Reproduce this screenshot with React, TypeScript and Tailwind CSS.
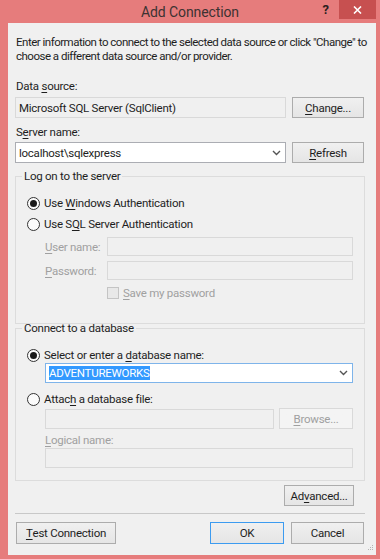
import React from "react";

const font = { fontFamily: 'Roboto, "Noto Sans", sans-serif' };

// mnemonic letter, underlined like a Win32 access key
function K({ c }: { c: string }) {
  return <span className="underline underline-offset-[2px] decoration-1">{c}</span>;
}

function Btn({
  children,
  className = "",
  primary,
  disabled,
}: {
  children: React.ReactNode;
  className?: string;
  primary?: boolean;
  disabled?: boolean;
}) {
  return (
    <div
      className={[
        "flex items-center justify-center border bg-gradient-to-b from-[#f0f0f0] to-[#e5e5e5]",
        primary ? "border-[#3c9bf0]" : disabled ? "border-[#d9d9d9]" : "border-[#acacac]",
        disabled ? "text-[#a0a0a0] from-[#f4f4f4] to-[#f4f4f4]" : "text-[#1e1e1e]",
        className,
      ].join(" ")}
    >
      {children}
    </div>
  );
}

function Chevron() {
  return (
    <svg width="9" height="6" viewBox="0 0 9 6" className="shrink-0">
      <path d="M1 1 L4.5 4.5 L8 1" fill="none" stroke="#555" strokeWidth="1.4" />
    </svg>
  );
}

function Radio({ checked }: { checked?: boolean }) {
  return (
    <span className="flex h-[13px] w-[13px] shrink-0 items-center justify-center rounded-full border border-[#333] bg-[#fbfbfb]">
      {checked && <span className="h-[7px] w-[7px] rounded-full bg-[#1a1a1a]" />}
    </span>
  );
}

export default function App() {
  return (
    <div
      className="flex h-[559px] w-[380px] flex-col overflow-hidden bg-[#e67c7c] text-[11.5px] leading-[14px] tracking-[-0.25px] text-[#1e1e1e]"
      style={font}
    >
      {/* title bar */}
      <div className="flex h-[23px] shrink-0 items-start">
        <div className="w-[68px]" />
        <div className="flex-1 pt-[3px] text-center text-[14px] leading-[18px] tracking-[-0.1px] text-[#3d3232]">
          Add Connection
        </div>
        <div className="flex w-[68px] items-start">
          <span className="w-[27px] pt-[2px] text-center text-[13px] font-bold leading-[16px] text-[#2a2020]">
            ?
          </span>
          <div className="flex h-[19px] w-[37px] items-center justify-center bg-[#c75050]">
            <svg width="9" height="8" viewBox="0 0 9 8">
              <path d="M1 0.5 L8 7.5 M8 0.5 L1 7.5" stroke="#fff" strokeWidth="1.6" />
            </svg>
          </div>
          <div className="w-[4px]" />
        </div>
      </div>

      {/* client area */}
      <div className="relative ml-[8px] mr-[4px] mb-[4px] flex flex-1 flex-col bg-[#f0f0f0] pl-[7px]">
        <p className="mt-[12px] pl-[1px] whitespace-nowrap tracking-[-0.5px]">
          Enter information to connect to the selected data source or click "Change" to
          <br />
          choose a different data source and/or provider.
        </p>

        <div className="mt-[16px] pl-[1px]">
          Data <K c="s" />ource:
        </div>
        <div className="mt-[4px] flex">
          <div className="flex h-[21px] w-[271px] items-center border border-[#d9d9d9] bg-[#f0f0f0] pl-[3px]">
            Microsoft SQL Server (SqlClient)
          </div>
          <Btn className="ml-[6px] h-[21px] w-[72px]">
            <K c="C" />
            hange...
          </Btn>
        </div>

        <div className="mt-[7px] pl-[1px]">
          S<K c="e" />rver name:
        </div>
        <div className="mt-[3px] flex">
          <div className="flex h-[21px] w-[271px] items-center border border-[#abadb3] bg-white pl-[3px] pr-[4px]">
            <span className="flex-1">localhost\sqlexpress</span>
            <Chevron />
          </div>
          <Btn className="ml-[6px] h-[21px] w-[72px]">
            <K c="R" />
            efresh
          </Btn>
        </div>

        {/* log on group */}
        <fieldset className="mt-[6px] w-[350px] border border-[#dcdcdc] pb-[23px]">
          <legend className="ml-[6px] px-[2px]">Log on to the server</legend>
          <div className="mt-[13px] ml-[11px] flex items-center gap-[4px]">
            <Radio checked />
            <span>
              Use <K c="W" />indows Authentication
            </span>
          </div>
          <div className="mt-[7px] ml-[11px] flex items-center gap-[4px]">
            <Radio />
            <span>
              Use S<K c="Q" />L Server Authentication
            </span>
          </div>
          <div className="mt-[6px] flex items-center text-[#a0a0a0]">
            <span className="w-[91px] shrink-0 whitespace-nowrap pl-[29px]">
              <K c="U" />
              ser name:
            </span>
            <div className="h-[19px] w-[246px] border border-[#d9d9d9] bg-[#f0f0f0]" />
          </div>
          <div className="mt-[5px] flex items-center text-[#a0a0a0]">
            <span className="w-[91px] shrink-0 whitespace-nowrap pl-[29px]">
              <K c="P" />
              assword:
            </span>
            <div className="h-[19px] w-[246px] border border-[#d9d9d9] bg-[#f0f0f0]" />
          </div>
          <div className="mt-[6px] ml-[91px] flex items-center gap-[4px] text-[#a0a0a0]">
            <span className="h-[12px] w-[12px] border border-[#c4c4c4] bg-[#e8e8e8]" />
            <span>
              <K c="S" />
              ave my password
            </span>
          </div>
        </fieldset>

        {/* database group */}
        <fieldset className="mt-[-3px] w-[350px] border border-[#dcdcdc] pb-[12px]">
          <legend className="ml-[6px] px-[2px]">Connect to a database</legend>
          <div className="mt-[13px] ml-[11px] flex items-center gap-[4px]">
            <Radio checked />
            <span>
              Select or enter a <K c="d" />atabase name:
            </span>
          </div>
          <div className="mt-[1px] ml-[29px] flex h-[20px] w-[308px] items-center border border-[#7eb4ea] bg-white pl-[3px] pr-[4px]">
            <span className="flex-1">
              <span className="bg-[#3399ff] text-white">ADVENTUREWORKS</span>
            </span>
            <Chevron />
          </div>
          <div className="mt-[9px] ml-[11px] flex items-center gap-[4px]">
            <Radio />
            <span>
              Attac<K c="h" /> a database file:
            </span>
          </div>
          <div className="mt-[2px] ml-[29px] flex items-center">
            <div className="h-[20px] w-[229px] border border-[#d9d9d9] bg-[#f0f0f0]" />
            <Btn disabled className="ml-[5px] h-[21px] w-[74px]">
              <K c="B" />
              rowse...
            </Btn>
          </div>
          <div className="mt-[4px] ml-[29px] text-[#a0a0a0]">
            <K c="L" />
            ogical name:
          </div>
          <div className="mt-[1px] ml-[29px] h-[20px] w-[308px] border border-[#d9d9d9] bg-[#f0f0f0]" />
        </fieldset>

        <div className="mt-[4px] flex w-[339px] justify-end">
          <Btn className="h-[21px] w-[70px]">
            Ad<K c="v" />anced...
          </Btn>
        </div>

        <div className="mt-[7px] h-px w-[350px] bg-[#c8c8c8]" />

        <div className="mt-[8px] flex w-[349px] items-center">
          <Btn className="ml-[1px] h-[22px] w-[100px]">
            <K c="T" />
            est Connection
          </Btn>
          <div className="flex-1" />
          <Btn primary className="h-[22px] w-[74px]">
            OK
          </Btn>
          <Btn className="ml-[7px] h-[22px] w-[73px]">Cancel</Btn>
        </div>

        {/* size grip */}
        <svg width="7" height="7" viewBox="0 0 7 7" className="absolute bottom-[4px] right-[2px]">
          <rect x="5" y="1" width="1" height="1" fill="#b4b4b4" />
          <rect x="3" y="3" width="1" height="1" fill="#b4b4b4" />
          <rect x="5" y="3" width="1" height="1" fill="#b4b4b4" />
          <rect x="1" y="5" width="1" height="1" fill="#b4b4b4" />
          <rect x="3" y="5" width="1" height="1" fill="#b4b4b4" />
          <rect x="5" y="5" width="1" height="1" fill="#b4b4b4" />
        </svg>
      </div>
    </div>
  );
}
